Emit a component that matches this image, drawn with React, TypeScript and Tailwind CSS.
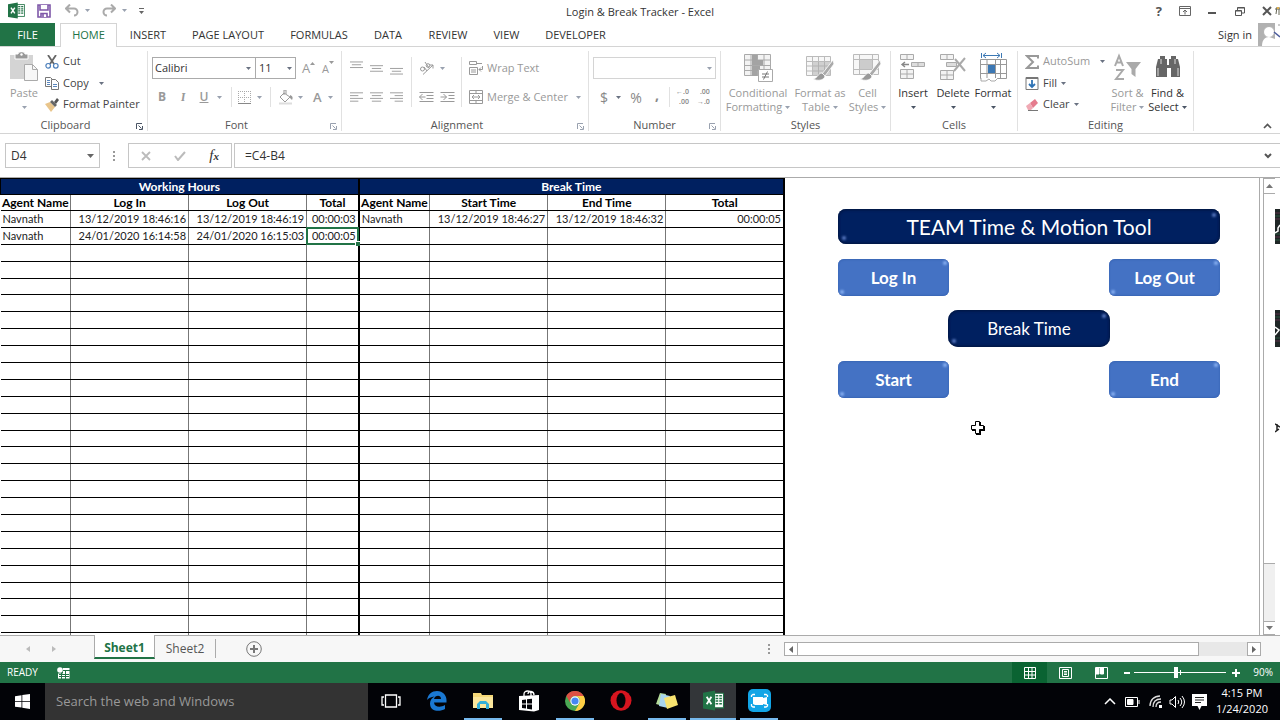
import type { ReactNode } from 'react';

const tabs = [
  { name: 'INSERT', width: 'w-[60px]' },
  { name: 'PAGE LAYOUT', width: 'w-[100px]' },
  { name: 'FORMULAS', width: 'w-[82px]' },
  { name: 'DATA', width: 'w-[56px]' },
  { name: 'REVIEW', width: 'w-[64px]' },
  { name: 'VIEW', width: 'w-[53px]' },
  { name: 'DEVELOPER', width: 'w-[85px]' },
];

const headers = ['Agent Name', 'Log In', 'Log Out', 'Total', 'Agent Name', 'Start Time', 'End Time', 'Total'];

const rows = [
  ['Navnath', '13/12/2019 18:46:16', '13/12/2019 18:46:19', '00:00:03', 'Navnath', '13/12/2019 18:46:27', '13/12/2019 18:46:32', '00:00:05'],
  ['Navnath', '24/01/2020 16:14:58', '24/01/2020 16:15:03', '00:00:05', '', '', '', ''],
];

const emptyRow = ['', '', '', '', '', '', '', ''];
const sheetRows = [...rows, ...Array.from({ length: 23 }, () => emptyRow)];

function Caret({ className = 'text-gray-500' }: { className?: string }) {
  return (
    <svg className={`h-[3px] w-[5px] shrink-0 ${className}`} viewBox="0 0 5 3" fill="currentColor">
      <path d="M0 0h5L2.500 3z" />
    </svg>
  );
}

function ExcelIcon({ className }: { className: string }) {
  return (
    <svg className={className} viewBox="0 0 20 20">
      <path d="M10 3h9.500v14H10z" fill="#fff" stroke="#217346" />
      <path d="M12 5.500h2.500M15.500 5.500H18M12 8h2.500M15.500 8H18M12 10.500h2.500M15.500 10.500H18M12 13h2.500M15.500 13H18" stroke="#217346" strokeWidth="1.400" />
      <path d="M0 2.500 11.500.5v19L0 17.500z" fill="#217346" />
      <path d="m3.500 6.500 4.500 7M8 6.500l-4.500 7" stroke="#fff" strokeWidth="1.700" />
    </svg>
  );
}

function Launcher({ className = 'text-gray-400' }: { className?: string }) {
  return (
    <svg className={`size-[7px] ${className}`} viewBox="0 0 7 7" fill="none" stroke="currentColor">
      <path d="M.5 6V.5H6M2.500 2.500l3 3M6.500 3v3.500H3" />
    </svg>
  );
}

function Group({ name, width, launcher, children }: { name: string; width: string; launcher?: string; children: ReactNode }) {
  return (
    <section className={`relative flex h-[80px] shrink-0 flex-col border-r border-[#e1e1e1] ${width}`}>
      <div className="flex h-[68px] items-start">{children}</div>
      <h2 className="text-center leading-3 text-[#555]">{name}</h2>
      {launcher && (
        <button aria-label={`${name} settings`} className="absolute right-1 bottom-[1px]">
          <Launcher className={launcher} />
        </button>
      )}
    </section>
  );
}

// Horizontal bars used by all the alignment buttons
function Lines({ label, d, className = 'w-[13px]' }: { label: string; d: string; className?: string }) {
  return (
    <button aria-label={label} className="text-[#999]">
      <svg className={`h-[14px] ${className}`} viewBox="0 0 14 14" fill="none" stroke="currentColor">
        <path d={d} />
      </svg>
    </button>
  );
}

function BigButton({ icon, top, bottom, width, enabled, caret = true }: { icon: ReactNode; top: string; bottom?: string; width: string; enabled?: boolean; caret?: boolean }) {
  return (
    <button className={`flex flex-col items-center leading-[14px] whitespace-nowrap ${width} ${enabled ? 'text-[#333]' : 'text-[#999]'}`}>
      <span className="flex h-[35px] items-start pt-px">{icon}</span>
      <span>{top}</span>
      <span className="flex h-[14px] items-center gap-[3px]">
        {bottom}
        {caret && <Caret className={enabled ? 'text-gray-600' : 'text-gray-400'} />}
      </span>
    </button>
  );
}

function Brush() {
  return (
    <>
      <path d="M27 8 16 22l3 2 9-12z" fill="#aaa" stroke="#fff" strokeWidth=".8" />
      <path d="M16 21c-4 0-4 5-9 6 4 2 11 2 12-3z" fill="#999" stroke="#fff" strokeWidth=".8" />
    </>
  );
}

function CutIcon() {
  return (
    <svg className="size-[14px]" viewBox="0 0 14 14" fill="none">
      <path d="m3 0 6 9M11 0 5 9" stroke="#666" strokeWidth="1.800" />
      <circle cx="3.200" cy="10.800" r="2.300" stroke="#4a7ebb" strokeWidth="1.200" />
      <circle cx="10.800" cy="10.800" r="2.300" stroke="#4a7ebb" strokeWidth="1.200" />
    </svg>
  );
}

function CopyIcon() {
  return (
    <svg className="size-[14px]" viewBox="0 0 14 14" fill="#fff" stroke="#777">
      <path d="M.5 1.500h5l2 2v7h-7z" />
      <path d="M6.500 3.500h4l3 3v7h-7z" />
      <path d="M2 4.500h3M2 6.500h3M2 8.500h3M8 8.500h4M8 10.500h4" stroke="#5b87bd" />
    </svg>
  );
}

function PainterIcon() {
  return (
    <svg className="size-[14px]" viewBox="0 0 14 14">
      <path d="m0 6 5-2 5 5-4 5z" fill="#e9c58b" />
      <path d="m5 4 2-2 5 5-2 2z" fill="#666" />
      <path d="m9 4 3-4 2 2-3 4z" fill="#555" />
    </svg>
  );
}

function PasteIcon() {
  return (
    <svg className="h-[29px] w-[28px]" viewBox="0 0 28 29">
      <path d="M0 3h23v24H0z" fill="#d4d4d4" />
      <path d="M5 2h3c0-3 7-3 7 0h3v5H5z" fill="#999" stroke="#fff" />
      <circle cx="11.500" cy="2.500" r="1.200" fill="#fff" />
      <path d="M14.500 12.500h8l5 5v11h-13z" fill="#f7f7f7" stroke="#aaa" />
      <path d="M22.500 12.500v5h5" fill="none" stroke="#aaa" />
    </svg>
  );
}

function Ribbon() {
  return (
    <div className="flex h-[87px] shrink-0 overflow-hidden border-b border-[#d4d4d4] pt-1 text-[11px]">
      <Group name="Clipboard" width="w-[148px] pr-4" launcher="text-gray-600">
        <div className="flex gap-[5px] pl-2">
          <BigButton icon={<PasteIcon />} top="Paste" width="w-8" />
          <div className="flex flex-col text-[#444]">
            <button className="flex h-[21px] items-center gap-1"><CutIcon />Cut</button>
            <button className="flex h-[22px] items-center gap-1"><CopyIcon />Copy <span className="pl-[6px]"><Caret /></span></button>
            <button className="flex h-[21px] items-center gap-1 whitespace-nowrap"><PainterIcon />Format Painter</button>
          </div>
        </div>
      </Group>

      <Group name="Font" width="w-[194px] pr-4" launcher="text-gray-400">
        <div className="flex flex-col gap-2 pt-[6px] pl-1">
          <div className="flex items-center">
            <div className="relative flex items-center">
              <select aria-label="Font name" className="h-[22px] w-[104px] appearance-none border border-[#ababab] bg-white pl-[2px] text-[#333]">
                <option>Calibri</option>
              </select>
              <span className="pointer-events-none absolute right-[5px]"><Caret /></span>
            </div>
            <div className="relative -ml-px flex items-center">
              <select aria-label="Font size" className="h-[22px] w-[41px] appearance-none border border-[#ababab] bg-white pl-[3px] text-[#333]">
                <option>11</option>
              </select>
              <span className="pointer-events-none absolute right-1"><Caret /></span>
            </div>
            <button className="ml-[6px] flex w-5 items-start text-[13px] leading-4 text-[#999]">A<svg className="mt-[2px] h-[3px] w-[5px]" viewBox="0 0 5 3" fill="currentColor"><path d="M0 3h5L2.500 0z" /></svg></button>
            <button className="flex w-5 items-start pt-[2px] text-[11px] leading-4 text-[#999]">A<Caret className="text-[#999]" /></button>
          </div>
          <div className="flex h-5 items-center text-[12px] text-[#999]">
            <button className="w-5 font-bold">B</button>
            <button className="w-[22px] font-serif font-bold italic">I</button>
            <button className="w-5 font-semibold underline">U</button>
            <span className="px-[3px]"><Caret className="text-gray-400" /></span>
            <span className="mx-[6px] h-5 border-l border-[#e1e1e1]" />
            <button aria-label="Borders">
              <svg className="size-[13px]" viewBox="0 0 13 13" fill="none" stroke="#aaa">
                <path d="M.5 0v12M6.500 0v12M12.500 0v12M0 .5h13M0 6.500h13" strokeDasharray="1 1" />
                <path d="M0 12.500h13" stroke="#888" />
              </svg>
            </button>
            <span className="px-[6px]"><Caret className="text-gray-400" /></span>
            <span className="mr-[4px] ml-[2px] h-5 border-l border-[#e1e1e1]" />
            <button aria-label="Fill color" className="ml-1">
              <svg className="size-[15px]" viewBox="0 0 15 15" fill="none">
                <path d="m5 3 6 4-5 5-5-5zM5 5V0h2v4" stroke="#999" />
                <path d="M11 5c3 1 3 3 2 5l-2-2z" fill="#999" />
                <path d="M0 13.500h13" stroke="#ddd" strokeWidth="2" />
              </svg>
            </button>
            <span className="px-[4px]"><Caret className="text-gray-400" /></span>
            <button className="ml-[6px] text-[13px] leading-4 font-semibold">A</button>
            <span className="pl-[6px]"><Caret className="text-gray-400" /></span>
          </div>
        </div>
      </Group>

      <Group name="Alignment" width="w-[247px] pr-4" launcher="text-gray-400">
        <div className="flex h-[56px] items-stretch pt-[6px] pl-2">
          <div className="flex flex-col gap-2">
            <div className="flex h-[22px] items-center gap-[7px]">
              <Lines label="Top align" d="M0 .5h14M2 3.500h10M0 6.500h14" />
              <Lines label="Middle align" d="M0 4.500h14M2 7.500h10M0 10.500h14" />
              <Lines label="Bottom align" d="M0 7.500h14M2 10.500h10M0 13.500h14" />
            </div>
            <div className="flex h-5 items-center gap-[7px]">
              <Lines label="Align left" d="M0 2.500h14M0 5.500h9M0 8.500h14M0 11.500h9" />
              <Lines label="Center" d="M0 2.500h14M2 5.500h10M0 8.500h14M2 11.500h10" />
              <Lines label="Align right" d="M0 2.500h14M5 5.500h9M0 8.500h14M5 11.500h9" />
            </div>
          </div>
          <div className="ml-2 flex flex-col gap-2 border-l border-[#e1e1e1] pl-[7px]">
            <button aria-label="Orientation" className="flex h-[22px] items-center gap-[6px]">
              <svg className="size-[15px]" viewBox="0 0 15 15" fill="none" stroke="#999">
                <circle cx="3.500" cy="8" r="2" />
                <path d="m5 6 3 4M6 1l4 6M4 13.500 14 4M10.500 4H14v3.500" />
                <circle cx="9" cy="4.500" r="1.800" />
              </svg>
              <Caret className="text-gray-400" />
            </button>
            <div className="flex h-5 items-center gap-[6px]">
              <Lines label="Decrease indent" className="w-[15px]" d="M0 2.500h14M7 5.500h7M7 8.500h7M0 11.500h14M6 7H0M3 4 0 7l3 3" />
              <Lines label="Increase indent" className="w-[15px]" d="M0 2.500h14M8 5.500h6M8 8.500h6M0 11.500h14M0 7h6M3 4l3 3-3 3" />
            </div>
          </div>
          <div className="ml-[6px] flex flex-col gap-2 border-l border-[#e1e1e1] pl-[7px] text-[#999]">
            <button className="flex h-[22px] items-center gap-1">
              <svg className="size-[14px]" viewBox="0 0 14 14" fill="none" stroke="#999">
                <path d="M.5.5h7v3h-7zM8 2.500h5M.5 6.500h8v7h-8zM2 9h5M2 11h5M13.500 5v3.500H10M12 6.500l-2 2 2 2" />
              </svg>
              Wrap Text
            </button>
            <button className="flex h-5 items-center gap-1 whitespace-nowrap">
              <svg className="size-[14px]" viewBox="0 0 14 14" fill="none" stroke="#999">
                <path d="M.5.5h13v13H.5zM.5 3.500h13M.5 10.500h13M7 .5v3M7 10.500v3M3 7h8M5 5 3 7l2 2M9 5l2 2-2 2" />
              </svg>
              Merge &amp; Center
              <span className="pl-1"><Caret className="text-gray-400" /></span>
            </button>
          </div>
        </div>
      </Group>

      <Group name="Number" width="w-[132px]" launcher="text-gray-400">
        <div className="flex flex-col gap-2 pt-[6px] pl-1">
          <div className="relative flex items-center">
            <select aria-label="Number format" className="h-[22px] w-[123px] appearance-none border border-[#d4d4d4] bg-white">
              <option></option>
            </select>
            <span className="pointer-events-none absolute right-1"><Caret className="text-gray-400" /></span>
          </div>
          <div className="flex h-5 items-center text-[14px] text-[#888]">
            <button className="w-[22px]">$</button>
            <span className="pl-px"><Caret /></span>
            <button className="w-[30px] text-center">%</button>
            <button className="w-3 pb-[6px] text-center font-bold">,</button>
            <span className="mx-[6px] h-5 border-l border-[#e1e1e1]" />
            <button className="flex flex-col items-end text-[7px] leading-[10px] font-semibold"><span>←.0</span><span>.00</span></button>
            <button className="ml-2 flex flex-col items-end text-[7px] leading-[10px] font-semibold"><span>.00</span><span>→.0</span></button>
          </div>
        </div>
      </Group>

      <Group name="Styles" width="w-[170px]">
        <BigButton
          width="w-[74px]"
          top="Conditional"
          bottom="Formatting"
          icon={
            <svg className="h-[30px] w-[29px]" viewBox="0 0 29 30">
              <path d="M.5 2.500h26v21H.5zM7 2.500v21M13.500 2.500v21M20 2.500v21M.5 8h26M.5 13.500h26M.5 18.500h26" fill="#f3f3f3" stroke="#aaa" />
              <path d="M8 3h5v5H8zM8 8h11v5H8zM8 14h8v5H8zM8 19h5v5H8z" fill="#a3a3a3" />
              <path d="M14.500 17.500h14v12h-14z" fill="#fff" stroke="#aaa" />
              <path d="M18 22h7M18 25h7M23.500 19.500l-4 8" stroke="#777" />
            </svg>
          }
        />
        <BigButton
          width="w-[50px]"
          top="Format as"
          bottom="Table"
          icon={
            <svg className="h-[30px] w-[29px]" viewBox="0 0 29 30">
              <path d="M.5 4.500h24v19H.5zM6.500 4.500v19M12.500 4.500v19M18.500 4.500v19M.5 9.500h24M.5 14h24M.5 19h24" fill="#f7f7f7" stroke="#bbb" />
              <path d="M7 10h17v13H7z" fill="#aaa" opacity=".5" />
              <Brush />
            </svg>
          }
        />
        <BigButton
          width="w-[45px]"
          top="Cell"
          bottom="Styles"
          icon={
            <svg className="h-[30px] w-[29px]" viewBox="0 0 29 30">
              <path d="M.5 2.500h25v20H.5zM6.500 2.500v20M19.500 2.500v20M.5 7.500h25M.5 17.500h25" fill="#f7f7f7" stroke="#bbb" />
              <path d="M7 8h12v9H7z" fill="#ccc" />
              <Brush />
            </svg>
          }
        />
      </Group>

      <Group name="Cells" width="w-[127px]">
        <BigButton
          enabled
          width="w-[44px]"
          top="Insert"
          icon={
            <svg className="h-[30px] w-[26px]" viewBox="0 0 26 30" fill="#f3f3f3" stroke="#aaa">
              <path d="M.5 2.500h13v5H.5zM7 2.500v5M.5 17.500h13v9H.5zM7 17.500v9M.5 22h13" />
              <path d="M11.500 10.500h13v4h-13zM18 10.500v4" fill="#ddd" />
              <path d="M9 12.500H2M5 10l-3 2.500L5 15" fill="none" stroke="#888" strokeWidth="1.400" />
            </svg>
          }
        />
        <BigButton
          enabled
          width="w-9"
          top="Delete"
          icon={
            <svg className="h-[30px] w-[26px]" viewBox="0 0 26 30" fill="#f3f3f3" stroke="#aaa">
              <path d="M.5 2.500h13v5H.5zM7 2.500v5M.5 18.500h13v9H.5zM7 18.500v9M.5 23h13" />
              <path d="M6.500 10.500h10v4h-10z" fill="#ddd" />
              <path d="m15 7 10 12M25 6 14 19" fill="none" strokeWidth="2" />
            </svg>
          }
        />
        <BigButton
          enabled
          width="w-[44px]"
          top="Format"
          icon={
            <svg className="h-[30px] w-[27px]" viewBox="0 0 27 30" fill="none">
              <path d="M1.500 1v5M21.500 1v5M3 3.500h17M6 1 3 3.500 6 6M17 1l3 2.500L17 6" stroke="#3c78b4" />
              <path d="M.5 7.500h26v19H.5zM7 7.500v19M15.500 7.500v19M20.500 7.500v19M.5 12.500h26M.5 21.500h26" stroke="#999" />
              <path d="M8 13h7v8H8z" fill="#3c78b4" />
              <path d="M1 26v3h5l3-2 2 2h4l3-3" fill="#fff" stroke="#aaa" />
            </svg>
          }
        />
      </Group>

      <Group name="Editing" width="w-[176px]">
        <div className="flex w-[88px] flex-col pl-[7px] text-[#444]">
          <button className="flex h-[21px] items-center gap-1 text-[#999]">
            <svg className="size-[14px]" viewBox="0 0 14 14" fill="none" stroke="#999" strokeWidth="2"><path d="M13 3.500V1H2l6 6-6 6h11v-2.500" /></svg>
            AutoSum
            <span className="pl-[6px]"><Caret /></span>
          </button>
          <button className="flex h-[22px] items-center gap-1">
            <svg className="size-[14px]" viewBox="0 0 14 14" fill="none"><path d="M1 1.500h12v12H1z" stroke="#777" /><path d="M1 2h12" stroke="#777" strokeWidth="2" /><path d="M7 4v7M4 8l3 3 3-3" stroke="#2f73b5" strokeWidth="1.800" /></svg>
            Fill<Caret />
          </button>
          <button className="flex h-[21px] items-center gap-1">
            <svg className="size-[14px]" viewBox="0 0 14 14"><path d="m5 5 5-4 3 4-5 5z" fill="#e57b8d" /><path d="m1 8 4-3 3 5-2 2H3z" fill="#f0a9b4" /><path d="M3 12.500h10" stroke="#777" /></svg>
            Clear<Caret />
          </button>
        </div>
        <BigButton
          width="w-[43px]"
          top="Sort &"
          bottom="Filter"
          icon={
            <svg className="h-[30px] w-[28px]" viewBox="0 0 28 30" fill="none" stroke="#aaa" strokeWidth="2">
              <path d="m1 14 4-10 4 10M3 10.500h5M2 18h7l-7 9h8" />
              <path d="M12 10h15l-5.500 7v8L17.500 22v-5z" fill="#aaa" stroke="none" />
            </svg>
          }
        />
        <BigButton
          enabled
          width="w-[37px]"
          top="Find &"
          bottom="Select"
          icon={
            <svg className="h-[30px] w-[26px]" viewBox="0 0 26 30" fill="#666">
              <path d="M5 4h5v3h2v6h2V7h2V4h5v3h2l2 8v10h-9v-9h-4v9H1V15l2-8h2z" />
              <path d="M3 16v8M23 16v8M6 7v5M20 7v5" stroke="#ddd" />
            </svg>
          }
        />
      </Group>
      <button aria-label="Collapse the ribbon" className="mr-2 ml-auto flex items-end pb-1">
        <svg className="h-[6px] w-[9px]" viewBox="0 0 9 6" fill="none" stroke="#555" strokeWidth="1.700"><path d="m1 5 3.500-3.500L8 5" /></svg>
      </button>
    </div>
  );
}

function Sheet() {
  return (
    <table className="h-full w-[785px] shrink-0 table-fixed border-collapse font-[Lato,sans-serif] text-[12px] leading-[12px] text-[#222]">
      <colgroup>
        <col className="w-[70px]" />
        <col className="w-[118px]" />
        <col className="w-[118px]" />
        <col className="w-[52px]" />
        <col className="w-[71px]" />
        <col className="w-[118px]" />
        <col className="w-[118px]" />
        <col className="w-[118px]" />
      </colgroup>
      <thead>
        <tr className="h-4 bg-[#002060] text-white">
          <th colSpan={4} className="border border-black p-0 font-bold">Working Hours</th>
          <th colSpan={4} className="border border-r-2 border-l-2 border-black p-0 font-bold">Break Time</th>
        </tr>
        <tr className="h-4 text-black">
          {headers.map((header, i) => (
            <th key={i} className={`border-y border-black p-0 font-bold whitespace-nowrap ${i === 3 || i === 7 ? 'border-r-2 border-r-black' : 'border-r border-r-[#777]'}`}>
              {header}
            </th>
          ))}
        </tr>
      </thead>
      <tbody className="text-[11px]">
        {sheetRows.map((row, r) => (
          <tr key={r} className="h-4">
            {row.map((cell, i) => (
              <td
                key={i}
                className={`relative border-b border-b-black px-[2px] py-0 whitespace-nowrap ${i % 4 === 0 ? 'text-left' : 'text-right'} ${i === 3 || i === 7 ? 'border-r-2 border-r-black' : 'border-r border-r-[#777]'}`}
              >
                {cell}
                {r === 1 && i === 3 && (
                  <span className="absolute -inset-px border-2 border-[#217346]">
                    <span className="absolute -right-[3px] -bottom-[3px] size-[5px] border-t border-l border-white bg-[#217346]" />
                  </span>
                )}
              </td>
            ))}
          </tr>
        ))}
        <tr className="h-[2px]">
          {emptyRow.map((_, i) => (
            <td key={i} className={`p-0 ${i === 3 || i === 7 ? 'border-r-2 border-r-black' : 'border-r border-r-[#777]'}`} />
          ))}
        </tr>
      </tbody>
    </table>
  );
}

function MacroButton({ children, className = '' }: { children: ReactNode; className?: string }) {
  return (
    <button className={`relative h-[37px] rounded-md bg-[#4472c4] text-[17px] font-bold text-white shadow-[inset_0_1px_2px_#3a66b5,inset_0_-1px_2px_#3a66b5] ${className}`}>
      {children}
      <span className="absolute top-[2px] right-[2px] size-1 rounded-full bg-[#8db4f5] blur-[1px]" />
      <span className="absolute bottom-[2px] left-[2px] size-1 rounded-full bg-[#8db4f5] blur-[1px]" />
    </button>
  );
}

function Banner({ children, className }: { children: ReactNode; className: string }) {
  return (
    <div className={`relative flex items-center justify-center bg-[#002060] text-white shadow-[inset_0_1px_3px_#001640,inset_0_-1px_3px_#001640] ${className}`}>
      {children}
      <span className="absolute top-1 right-1 size-1 rounded-full bg-[#5b7cc4] blur-[1px]" />
      <span className="absolute bottom-1 left-1 size-1 rounded-full bg-[#5b7cc4] blur-[1px]" />
    </div>
  );
}

function EdgeStrip() {
  return (
    <svg className="h-full w-[5px] shrink-0" viewBox="0 0 5 457" preserveAspectRatio="xMinYMin slice">
      <path d="M0 31h5v35H0zM0 132h5v37H0z" fill="#1f2626" />
      <path d="M0 35h5M0 41h5M0 59h5M0 136h5M0 142h5M0 163h5" stroke="#5b3048" />
      <path d="M0 38h5M0 56h5M0 62h5M0 139h5M0 160h5" stroke="#2d5540" />
      <path d="M5 47 3 50v3L0 55M0 149l4 3-4 5" stroke="#fff" strokeWidth="1.500" fill="none" />
      <path d="m0 246 5 3M2 246v7M0 254l4-3" stroke="#222" strokeWidth="1.500" />
    </svg>
  );
}

function TaskbarApp({ label, children, open, active }: { label: string; children: ReactNode; open?: boolean; active?: boolean }) {
  return (
    <button aria-label={label} className={`flex w-[46px] flex-col items-center ${active ? 'bg-[#333639]' : ''}`}>
      <span className="flex flex-1 items-center">{children}</span>
      <span className={`h-[2px] ${active ? 'w-full' : 'w-[38px]'} ${open ? 'bg-[#76b9ed]' : ''}`} />
    </button>
  );
}

export default function App() {
  return (
    <div className="flex h-screen flex-col overflow-hidden bg-white font-['Open_Sans',sans-serif] text-[11px] text-[#333]">
      {/* Title bar */}
      <header className="flex h-[23px] shrink-0 items-center justify-between">
        <div className="flex w-[200px] items-center pb-[2px] pl-2">
          <ExcelIcon className="size-[17px]" />
          <button aria-label="Save" className="ml-3">
            <svg className="size-[14px]" viewBox="0 0 14 14" fill="#fff" stroke="#7e57a8" strokeWidth="1.600">
              <path d="M1 1h12v12H1z" />
              <path d="M3 1v5h8V1M4 13V9.500h6V13" />
              <path d="M6 10v3" />
            </svg>
          </button>
          <button aria-label="Undo" className="ml-[14px] flex items-center gap-[6px]">
            <svg className="h-[13px] w-[14px]" viewBox="0 0 14 13" fill="none" stroke="#aaa" strokeWidth="2"><path d="M1 4.500h8a3.500 3.500 0 0 1 0 7M5 .5l-4 4 4 4" /></svg>
            <Caret className="text-gray-400" />
          </button>
          <button aria-label="Redo" className="ml-3 flex items-center gap-[6px]">
            <svg className="h-[13px] w-[14px]" viewBox="0 0 14 13" fill="none" stroke="#aaa" strokeWidth="2"><path d="M13 4.500H5a3.500 3.500 0 0 0 0 7M9 .5l4 4-4 4" /></svg>
            <Caret className="text-gray-400" />
          </button>
          <button aria-label="Customize" className="ml-3">
            <svg className="h-[6px] w-[5px]" viewBox="0 0 5 6" fill="#666"><path d="M0 0h5v1H0zM0 3h5L2.500 6z" /></svg>
          </button>
        </div>
        <h1 className="pt-[2px]">Login &amp; Break Tracker - Excel</h1>
        <div className="flex w-[200px] items-center justify-end pb-[2px]">
          <button className="text-[13px] leading-4 font-bold text-[#555]">?</button>
          <button aria-label="Ribbon display options" className="ml-[17px]">
            <svg className="h-[10px] w-[12px]" viewBox="0 0 12 10" fill="none" stroke="#666"><path d="M.5.5h11v9H.5zM.5 2.500h11M6 8.500v-4M4 6l2-2 2 2" /></svg>
          </button>
          <button aria-label="Minimize" className="ml-4">
            <svg className="size-[10px]" viewBox="0 0 10 10"><path d="M1 7h8" stroke="#555" strokeWidth="2" /></svg>
          </button>
          <button aria-label="Restore" className="ml-[18px]">
            <svg className="size-[10px]" viewBox="0 0 10 10" fill="none" stroke="#555"><path d="M.5 4.500h6v5h-6zM.5 5h6M2.500 4V1.500h7V7H7M2.500 2h7" /></svg>
          </button>
          <button aria-label="Close" className="ml-[17px]">
            <svg className="size-[10px]" viewBox="0 0 10 10" stroke="#555" strokeWidth="2"><path d="m1 1 8 8M9 1 1 9" /></svg>
          </button>
          <svg className="ml-[3px] h-[10px] w-[5px]" viewBox="0 0 5 10"><path d="m2 1-1 7M0 3h5M4 1v8" stroke="#665" fill="none" /><path d="M2 1h2v2H2z" fill="#e0b050" /></svg>
        </div>
      </header>

      {/* Ribbon tabs */}
      <nav className="flex h-6 shrink-0 items-stretch border-b border-[#d4d4d4]">
        <button className="w-[55px] bg-[#217346] pt-[2px] text-white">FILE</button>
        <button className="-mb-px ml-[5px] w-[57px] border border-b-0 border-[#d4d4d4] bg-white text-[#217346]">HOME</button>
        <div className="ml-px flex pt-[2px]">
          {tabs.map((tab) => (
            <button key={tab.name} className={`whitespace-nowrap ${tab.width}`}>{tab.name}</button>
          ))}
        </div>
        <a href="#" className="mr-[6px] ml-auto flex items-center pt-px">Sign in</a>
        <svg className="h-[23px] w-[22px]" viewBox="0 0 22 23">
          <path d="M0 0h17v23H0z" fill="#b1b1b1" />
          <circle cx="11" cy="9" r="5.500" fill="#fff" stroke="#b1b1b1" />
          <path d="M4 23c0-6 3-9 7-9l6 2v7z" fill="#fff" />
          <path d="m16 9 6 5" stroke="#4a5a9c" strokeWidth="1.500" />
          <path d="M21 1v2" stroke="#999" />
        </svg>
      </nav>

      <Ribbon />

      {/* Formula bar */}
      <div className="flex h-[44px] shrink-0 items-start border-b border-[#ababab] pt-[9px]">
        <div className="relative ml-[5px] flex items-center">
          <input aria-label="Name box" defaultValue="D4" className="h-[25px] w-[95px] border border-[#c6c6c6] pl-[5px] text-[12px]" />
          <svg className="pointer-events-none absolute right-[6px] h-1 w-[7px]" viewBox="0 0 7 4" fill="#666"><path d="M0 0h7L3.500 4z" /></svg>
        </div>
        <div className="flex h-[25px] w-7 items-center justify-center">
          <svg className="h-[10px] w-[2px]" viewBox="0 0 2 10" fill="#999"><path d="M0 0h2v2H0zM0 4h2v2H0zM0 8h2v2H0z" /></svg>
        </div>
        <div className="flex h-[25px] w-[104px] items-center justify-between border border-[#c6c6c6] px-3">
          <button aria-label="Cancel"><svg className="size-[10px]" viewBox="0 0 10 10" stroke="#bbb" strokeWidth="1.800"><path d="m1 1 8 8M9 1 1 9" /></svg></button>
          <button aria-label="Enter"><svg className="h-[10px] w-3" viewBox="0 0 12 10" fill="none" stroke="#bbb" strokeWidth="2"><path d="m1 5 3 4 7-8" /></svg></button>
          <button aria-label="Insert function" className="font-['Liberation_Serif',serif] text-[15px] leading-4 italic">f<span className="text-[11px] font-bold">x</span></button>
        </div>
        <div className="ml-[2px] flex h-[25px] flex-1 items-center border border-r-0 border-[#c6c6c6]">
          <input aria-label="Formula" defaultValue="=C4-B4" className="flex-1 pl-[10px] text-[12px]" />
          <button aria-label="Expand formula bar" className="pr-2">
            <svg className="h-[6px] w-2" viewBox="0 0 8 6" fill="none" stroke="#555" strokeWidth="2"><path d="m1 1 3 3 3-3" /></svg>
          </button>
        </div>
      </div>

      {/* Worksheet */}
      <main className="flex min-h-0 flex-1 overflow-hidden">
        <Sheet />
        <div className="relative flex-1 border-r border-[#ababab] pt-[31px] pr-[39px] pl-[53px] font-[Lato,sans-serif]">
          <Banner className="h-[35px] rounded-lg text-[21px]">TEAM Time &amp; Motion Tool</Banner>
          <div className="mt-[15px] grid grid-cols-[111px_1fr_111px] gap-y-[14px]">
            <MacroButton>Log In</MacroButton>
            <MacroButton className="col-start-3">Log Out</MacroButton>
            <Banner className="col-start-2 -mx-px h-[37px] rounded-[10px] text-[17px]">Break Time</Banner>
            <MacroButton className="col-start-1">Start</MacroButton>
            <MacroButton className="col-start-3">End</MacroButton>
          </div>
          <svg className="absolute top-[242px] left-[185px] size-[15px]" viewBox="0 0 15 15">
            <path d="M6 2h5v4h4v5h-4v4H6v-4H2V6h4z" fill="#000" />
            <path d="M5.500 1.500h4v4h4v4h-4v4h-4v-4h-4v-4h4z" fill="#fff" stroke="#000" />
          </svg>
        </div>
        <div className="ml-[3px] flex w-3 flex-col border-l border-[#ababab] bg-[#f0f0f0]">
          <button aria-label="Scroll up" className="flex h-4 items-center justify-center border-y border-[#ababab] bg-white"><svg className="h-1 w-[7px]" viewBox="0 0 7 4" fill="#777"><path d="M0 4h7L3.500 0z" /></svg></button>
          <div className="flex-1 border-b border-[#ababab] bg-white" />
          <div className="h-[57px]" />
          <button aria-label="Scroll down" className="flex h-[14px] items-center justify-center border-y border-[#ababab] bg-white"><svg className="h-1 w-[7px]" viewBox="0 0 7 4" fill="#777"><path d="M0 0h7L3.500 4z" /></svg></button>
        </div>
        <EdgeStrip />
      </main>

      {/* Sheet tabs */}
      <div className="flex h-[27px] shrink-0 border-t border-[#ababab] bg-[#f7f7f7] text-[12px]">
        <div className="flex w-[94px] items-center gap-[22px] pl-[26px]">
          <button aria-label="Previous sheet"><svg className="h-[6px] w-1" viewBox="0 0 4 6" fill="#bbb"><path d="M4 0v6L0 3z" /></svg></button>
          <button aria-label="Next sheet"><svg className="h-[6px] w-1" viewBox="0 0 4 6" fill="#bbb"><path d="M0 0v6l4-3z" /></svg></button>
        </div>
        <button className="-mt-px h-6 w-[61px] border-x border-b-2 border-x-[#ababab] border-b-[#217346] bg-white pt-1 leading-4 font-bold text-[#217346]">Sheet1</button>
        <button className="mt-[3px] h-[19px] w-[61px] border-r border-[#ababab] leading-4 text-[#555]">Sheet2</button>
        <button aria-label="New sheet" className="ml-[30px]">
          <svg className="size-4" viewBox="0 0 16 16" fill="none" stroke="#777"><circle cx="8" cy="8" r="7.300" /><path d="M8 4v8M4 8h8" strokeWidth="2" /></svg>
        </button>
        <div className="ml-auto flex items-center pr-[19px]">
          <svg className="mr-[14px] h-[10px] w-[2px]" viewBox="0 0 2 10" fill="#999"><path d="M0 0h2v2H0zM0 4h2v2H0zM0 8h2v2H0z" /></svg>
          <div className="flex h-[14px] w-[477px] bg-[#e8e8e8]">
            <button aria-label="Scroll left" className="flex w-[14px] items-center justify-center border border-[#ababab] bg-white"><svg className="h-[7px] w-1" viewBox="0 0 4 7" fill="#666"><path d="M4 0v7L0 3.500z" /></svg></button>
            <div className="w-[401px] border border-l-0 border-[#ababab] bg-white" />
            <button aria-label="Scroll right" className="ml-auto flex w-[14px] items-center justify-center border border-[#ababab] bg-white"><svg className="h-[7px] w-1" viewBox="0 0 4 7" fill="#666"><path d="M0 0v7l4-3.500z" /></svg></button>
          </div>
        </div>
      </div>

      {/* Status bar */}
      <footer className="flex h-[21px] shrink-0 items-stretch bg-[#217346] text-[10px] text-white">
        <span className="flex w-[57px] items-center pl-[7px]">READY</span>
        <button aria-label="Record macro">
          <svg className="h-3 w-[13px]" viewBox="0 0 13 12" fill="#fff"><circle cx="3" cy="3" r="2.800" /><path d="M6 1h6.500v2H6zM1 6.500V11.500h11.500V4H6v2.500z" /><path d="M2 7.500h10M2 9.500h10M4.500 6v6M8.500 4v8" stroke="#217346" /></svg>
        </button>
        <div className="ml-auto flex items-stretch pr-[7px]">
          <button aria-label="Normal view" className="flex w-[35px] items-center justify-center bg-[#0a6332]">
            <svg className="size-3" viewBox="0 0 12 12" fill="none" stroke="#fff"><path d="M.5.5h11v11H.5zM4.500 0v12M8 0v12M0 4.500h12M0 8h12" /></svg>
          </button>
          <button aria-label="Page layout view" className="flex w-9 items-center justify-center">
            <svg className="h-3 w-[13px]" viewBox="0 0 13 12" fill="none" stroke="#fff"><path d="M.5.5h12v11H.5zM3.500 2.500h6v7h-6zM5 4.500h3M5 6h3M5 7.500h3" /></svg>
          </button>
          <button aria-label="Page break preview" className="flex w-9 items-center justify-center">
            <svg className="h-3 w-[13px]" viewBox="0 0 13 12" fill="none" stroke="#fff"><path d="M.5.5h12v11H.5z" /><path d="M1 1h3v6H1zM5.500 1h3v6h-3z" fill="#fff" /></svg>
          </button>
          <button aria-label="Zoom out" className="flex w-[15px] items-center justify-center"><svg className="size-2" viewBox="0 0 8 8"><path d="M1 4h6" stroke="#fff" strokeWidth="2" /></svg></button>
          <div className="relative flex items-center">
            <input
              type="range"
              aria-label="Zoom"
              min="0"
              max="100"
              defaultValue="46"
              className="h-3 w-[92px] appearance-none bg-[linear-gradient(#fff,#fff)] bg-[length:100%_1px] bg-center bg-no-repeat [&::-webkit-slider-thumb]:h-[11px] [&::-webkit-slider-thumb]:w-1 [&::-webkit-slider-thumb]:appearance-none [&::-webkit-slider-thumb]:bg-white"
            />
            <span className="pointer-events-none absolute left-1/2 h-[5px] w-px bg-white" />
          </div>
          <button aria-label="Zoom in" className="ml-[2px] flex w-4 items-center justify-center"><svg className="size-2" viewBox="0 0 8 8"><path d="M0 4h8M4 0v8" stroke="#fff" strokeWidth="2" /></svg></button>
          <span className="flex w-[29px] items-center justify-end">90%</span>
        </div>
      </footer>

      {/* Windows taskbar */}
      <div className="flex h-[37px] shrink-0 items-stretch bg-[#020307] text-white">
        <button aria-label="Start" className="flex w-[45px] items-center justify-center">
          <svg className="size-[15px]" viewBox="0 0 15 15" fill="#fff"><path d="M0 2.200 6.500 1.200V7H0zM7.300 1 15 0v7H7.300zM0 7.800h6.500v5.800L0 12.700zM7.300 7.800H15V15l-7.700-1.200z" /></svg>
        </button>
        <input aria-label="Search" placeholder="Search the web and Windows" className="w-[323px] bg-[#333] pl-[11px] text-[13px] placeholder:text-[#999]" />
        <TaskbarApp label="Task view">
          <svg className="h-[14px] w-[20px]" viewBox="0 0 20 14" fill="none" stroke="#fff" strokeWidth="1.300"><path d="M4.500 1h11v12h-11zM3 3H1v8h2M17 3h2v8h-2" /></svg>
        </TaskbarApp>
        <TaskbarApp label="Edge">
          <svg className="size-[20px]" viewBox="0 0 20 20" fill="#1a78d2"><path d="M0 9C1 3 5 0 10 0c6 0 9.500 4.500 9.500 9v2.500H7c.5 5 7 5 11 2.500v4c-5 3-15 3-15-5.500C3 9 5 7 7.500 5.500 4 6 1.500 7 0 9zM7 8h7c0-4.500-6-4-7 0z" /></svg>
        </TaskbarApp>
        <TaskbarApp label="File Explorer" open>
          <svg className="h-[18px] w-[22px]" viewBox="0 0 22 18"><path d="M1 1h8l1 2h11v13H1z" fill="#f5d878" /><path d="M1 5h20v11H1z" fill="#fbe69c" /><path d="M5 17v-5l3-3h6l3 3v5h-3v-5H8v5z" fill="#35b0d8" /></svg>
        </TaskbarApp>
        <TaskbarApp label="Store">
          <svg className="h-[22px] w-[20px]" viewBox="0 0 20 22"><path d="M0 6 20 5v15l-5 1.500L0 20z" fill="#fff" /><path d="M5 7V4c0-4 7-4 7 0v2M9 4c0-4 6-3 6 1" fill="none" stroke="#fff" strokeWidth="1.300" /><path d="m3 10 4-.5v4H3zM8 9.300l5-.5v4.700H8zM3 14.500h4v4L3 18zM8 14.500h5v5l-5-.800z" fill="#020307" /></svg>
        </TaskbarApp>
        <TaskbarApp label="Chrome" open>
          <svg className="size-[20px]" viewBox="0 0 20 20"><circle cx="10" cy="10" r="10" fill="#4aa853" /><path d="M1.300 5A10 10 0 0 1 18.700 5H10a5 5 0 0 0-4.300 7.500z" fill="#dd5144" /><path d="M18.700 5A10 10 0 0 1 10 20l4.300-7.500A5 5 0 0 0 10 5z" fill="#ffce44" /><circle cx="10" cy="10" r="4.700" fill="#fff" /><circle cx="10" cy="10" r="3.600" fill="#4587f2" /></svg>
        </TaskbarApp>
        <TaskbarApp label="Opera">
          <svg className="h-[21px] w-[22px]" viewBox="0 0 22 21"><ellipse cx="11" cy="10.500" rx="10.500" ry="10.200" fill="#d6151f" /><ellipse cx="11" cy="10.500" rx="4.500" ry="7.500" fill="#020307" /></svg>
        </TaskbarApp>
        <TaskbarApp label="Sticky Notes" open>
          <svg className="h-[18px] w-[22px]" viewBox="0 0 22 18"><path d="m0 12 4-11 6 1-3 12z" fill="#b4dc9a" /><path d="m5 2 9 2-2 12-9-2z" fill="#a9d5ef" /><path d="m8 6 11-3 3 10-11 4z" fill="#f8e370" /></svg>
        </TaskbarApp>
        <TaskbarApp label="Excel" open active>
          <ExcelIcon className="size-[21px]" />
        </TaskbarApp>
        <TaskbarApp label="Zoom" open>
          <svg className="size-[23px]" viewBox="0 0 23 23"><rect width="23" height="23" rx="5" fill="#12a5e6" /><path d="M5 8h10v1l4-1v8l-4-1v1H7l-2-1z" fill="#fff" /><path d="M3.500 8V6.500L5 5.500h2M16 5.500h2l1.500 1V8M3.500 15v2l1.500 1h2M16 18h2l1.500-1v-2" fill="none" stroke="#fff" strokeWidth="1.300" /></svg>
        </TaskbarApp>
        <div className="ml-auto flex items-center pr-3">
          <button aria-label="Show hidden icons"><svg className="h-[7px] w-3" viewBox="0 0 12 7" fill="none" stroke="#fff" strokeWidth="1.500"><path d="m1 6 5-5 5 5" /></svg></button>
          <svg className="ml-[9px] h-[10px] w-[15px]" viewBox="0 0 15 10" fill="none" stroke="#fff"><path d="M.5.5h12v9H.5zM14 3v4" /><path d="M2.500 2.500H8v5H2.500z" fill="#fff" /></svg>
          <svg className="ml-[9px] size-[13px]" viewBox="0 0 13 13" fill="none" stroke="#ddd" strokeWidth="1.300"><path d="M1 11C1 5 5 1 11 1M4 12c0-5 3-8 8-8M7 12c0-3 2-5 5-5" /><path d="M10 10h3v3h-3z" fill="#fff" stroke="none" /></svg>
          <svg className="ml-[7px] h-[14px] w-4" viewBox="0 0 16 14" fill="none" stroke="#fff"><path d="M1 5h2l3.500-3.500v11L3 9H1zM9 5q1.500 2 0 4M11 3q3.500 4 0 8M13 1q5 6 0 12" /></svg>
          <svg className="ml-[7px] h-[16px] w-[15px]" viewBox="0 0 15 16"><path d="M0 0h15v12H9.500L7.500 16l-2-4H0z" fill="#fff" /><path d="M3 3.500h9M3 6h9M3 8.500h6" stroke="#222" /></svg>
          <div className="ml-[9px] flex flex-col items-center pb-[2px] leading-4">
            <span>4:15 PM</span>
            <span>1/24/2020</span>
          </div>
        </div>
      </div>
    </div>
  );
}
